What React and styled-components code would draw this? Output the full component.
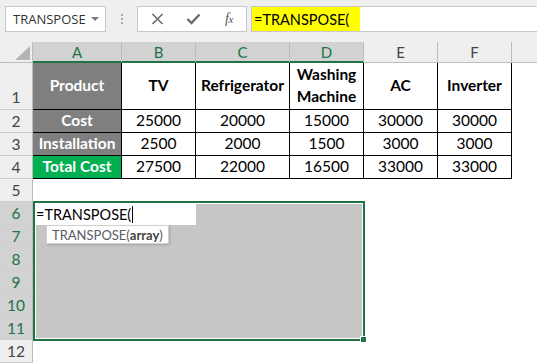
import React from 'react';
import styled, { createGlobalStyle } from 'styled-components';

const GREEN = '#217346';

const columns = ['A', 'B', 'C', 'D', 'E', 'F'];
const selectedCols = ['A', 'B', 'C', 'D'];
const selectedRows = [6, 7, 8, 9, 10, 11];

// first cell of each row is the label in column A
const tableRows = [
  { label: 'Product', labelBg: '#7f7f7f', values: ['TV', 'Refrigerator', 'Washing Machine', 'AC', 'Inverter'], bold: true },
  { label: 'Cost', labelBg: '#7f7f7f', values: ['25000', '20000', '15000', '30000', '30000'] },
  { label: 'Installation', labelBg: '#7f7f7f', values: ['2500', '2000', '1500', '3000', '3000'] },
  { label: 'Total Cost', labelBg: '#00b050', values: ['27500', '22000', '16500', '33000', '33000'] },
];

const GlobalStyle = createGlobalStyle`
  html, body {
    margin: 0;
    padding: 0;
    background: #fff;
  }
  body {
    font-family: Lato, "Open Sans", sans-serif;
  }
`;

const Window = styled.div`
  width: 537px;
  height: 363px;
  overflow: hidden;
  display: flex;
  flex-direction: column;
`;

const Toolbar = styled.div`
  height: 42px;
  flex-shrink: 0;
  box-sizing: border-box;
  background: #efefef;
  display: flex;
  align-items: flex-start;
  padding: 6px 0 0 5px;
`;

const NameBox = styled.div`
  width: 101px;
  height: 26px;
  box-sizing: border-box;
  background: #fff;
  border: 1px solid #c8c8c8;
  display: flex;
  align-items: center;
  justify-content: space-between;
  padding: 0 6px 0 7px;
  font-family: "Open Sans", sans-serif;
  font-size: 13px;
  color: #333;
`;

const DropArrow = styled.span`
  width: 0;
  height: 0;
  border-left: 4px solid transparent;
  border-right: 4px solid transparent;
  border-top: 4px solid #7a7a7a;
`;

const Grip = styled.div`
  width: 31px;
  height: 26px;
  display: flex;
  flex-direction: column;
  align-items: center;
  justify-content: center;
  gap: 2px;
  span {
    width: 2px;
    height: 2px;
    background: #a8a8a8;
  }
`;

const FxButtons = styled.div`
  width: 110px;
  height: 26px;
  box-sizing: border-box;
  background: #fff;
  border: 1px solid #c8c8c8;
  display: grid;
  grid-template-columns: repeat(3, 36px);
  align-items: center;
  justify-items: center;
  padding-left: 1px;
`;

const FxLabel = styled.span`
  font-family: "Liberation Serif", serif;
  font-style: italic;
  font-size: 14px;
  color: #555;
  letter-spacing: -0.5px;
  span {
    font-size: 11px;
  }
`;

const FormulaBar = styled.div`
  flex: 1;
  margin-left: 4px;
  height: 26px;
  box-sizing: border-box;
  background: #fff;
  border: 1px solid #c8c8c8;
  border-right: none;
  display: flex;
`;

const Highlight = styled.div`
  width: 106px;
  background: #ffff00;
  display: flex;
  align-items: center;
  padding-left: 2px;
  font-size: 14.5px;
  color: #000;
`;

const Sheet = styled.div`
  flex: 1;
  display: grid;
  grid-template-columns: 33px 89px 74px 94px 74px 74px 74px 1fr;
  grid-template-rows: 21px 47px repeat(11, 23px);
  background: #fff;
`;

const Corner = styled.div`
  grid-row: 1;
  grid-column: 1;
  box-sizing: border-box;
  background: #efefef;
  border-right: 1px solid #bdbdbd;
  border-bottom: 1px solid #bdbdbd;
  display: flex;
  justify-content: flex-end;
  align-items: flex-end;
  padding: 0 2px 2px 0;
`;

const Triangle = styled.span`
  width: 0;
  height: 0;
  border-left: 15px solid transparent;
  border-bottom: 14px solid #b4b4b4;
`;

const ColHead = styled.div`
  grid-row: 1;
  grid-column: ${p => p.$col};
  box-sizing: border-box;
  background: ${p => (p.$active ? '#d2d2d2' : '#efefef')};
  color: ${p => (p.$active ? GREEN : '#444')};
  border-right: 1px solid #bdbdbd;
  border-bottom: ${p => (p.$active ? `2px solid ${GREEN}` : '1px solid #bdbdbd')};
  display: flex;
  align-items: center;
  justify-content: center;
  font-size: 15px;
`;

const HeadFill = styled.div`
  grid-row: 1;
  grid-column: 8;
  background: #efefef;
  border-bottom: 1px solid #bdbdbd;
`;

const RowHead = styled.div`
  grid-row: ${p => p.$row};
  grid-column: 1;
  box-sizing: border-box;
  background: ${p => (p.$active ? '#d2d2d2' : '#efefef')};
  color: ${p => (p.$active ? GREEN : '#444')};
  border-right: 1px solid #bdbdbd;
  border-bottom: 1px solid #cfcfcf;
  display: flex;
  justify-content: center;
  align-items: ${p => (p.$tall ? 'flex-end' : 'center')};
  padding-bottom: ${p => (p.$tall ? '3px' : '0')};
  font-size: 15.5px;
`;

const Cell = styled.div`
  grid-row: ${p => p.$row};
  grid-column: ${p => p.$col};
  box-sizing: border-box;
  background: ${p => p.$bg || '#fff'};
  color: ${p => p.$fg || '#000'};
  font-weight: ${p => (p.$bold ? 700 : 400)};
  border-right: 1px solid #000;
  border-bottom: 1px solid #000;
  display: flex;
  align-items: center;
  justify-content: center;
  text-align: center;
  font-size: 15.5px;
  line-height: 1.4;
  white-space: pre-line;
`;

const Selection = styled.div`
  grid-row: 7 / 13;
  grid-column: 2 / 6;
  margin: -1px -1px -1px 0;
  position: relative;
  box-sizing: border-box;
  background: #c6c6c6;
  border: 2px solid ${GREEN};
  box-shadow: inset 0 0 0 1px #fff;
`;

const FillHandle = styled.span`
  position: absolute;
  right: -4px;
  bottom: -4px;
  width: 5px;
  height: 5px;
  background: ${GREEN};
  border: 1px solid #fff;
`;

const EditCell = styled.div`
  grid-row: 7;
  grid-column: 2 / 4;
  margin: 2px 0 0 2px;
  position: relative;
  background: #fff;
  display: flex;
  align-items: center;
  padding-left: 1px;
  font-size: 14.5px;
  color: #000;
`;

const Caret = styled.span`
  width: 1px;
  height: 17px;
  margin-left: 1px;
  background: #000;
`;

const Tooltip = styled.div`
  grid-row: 8;
  grid-column: 2 / 5;
  justify-self: start;
  align-self: start;
  margin-left: 13px;
  position: relative;
  height: 19px;
  box-sizing: border-box;
  padding: 0 5px;
  background: #fff;
  border: 1px solid #d0d0d0;
  box-shadow: 1px 1px 2px rgba(0, 0, 0, 0.18);
  display: flex;
  align-items: center;
  font-size: 13px;
  color: #5a5a66;
  b {
    color: #444;
  }
`;

const CloseIcon = () => (
  <svg width="13" height="12" viewBox="0 0 13 12">
    <path d="M1.5 1 L11.5 11 M11.5 1 L1.5 11" stroke="#6b6b6b" strokeWidth="1.6" fill="none" />
  </svg>
);

const CheckIcon = () => (
  <svg width="15" height="12" viewBox="0 0 15 12">
    <path d="M1.5 6 L5.5 10 L13.5 1.5" stroke="#6b6b6b" strokeWidth="2.4" fill="none" />
  </svg>
);

const App = () => {
  return (
    <>
      <GlobalStyle />
      <Window>
        <Toolbar>
          <NameBox>
            TRANSPOSE
            <DropArrow />
          </NameBox>
          <Grip>
            <span />
            <span />
            <span />
          </Grip>
          <FxButtons>
            <CloseIcon />
            <CheckIcon />
            <FxLabel>
              f<span>x</span>
            </FxLabel>
          </FxButtons>
          <FormulaBar>
            <Highlight>=TRANSPOSE(</Highlight>
          </FormulaBar>
        </Toolbar>

        <Sheet>
          <Corner>
            <Triangle />
          </Corner>
          {columns.map((c, i) => (
            <ColHead key={c} $col={i + 2} $active={selectedCols.includes(c)}>
              {c}
            </ColHead>
          ))}
          <HeadFill />

          {Array.from({ length: 12 }, (_, i) => i + 1).map(n => (
            <RowHead key={n} $row={n + 1} $tall={n === 1} $active={selectedRows.includes(n)}>
              {n}
            </RowHead>
          ))}

          {tableRows.map((row, r) => (
            <React.Fragment key={row.label}>
              <Cell $row={r + 2} $col={2} $bg={row.labelBg} $fg="#fff" $bold>
                {row.label}
              </Cell>
              {row.values.map((v, c) => (
                <Cell key={c} $row={r + 2} $col={c + 3} $bold={row.bold}>
                  {v.replace(' ', '\n')}
                </Cell>
              ))}
            </React.Fragment>
          ))}

          <Selection>
            <FillHandle />
          </Selection>
          <EditCell>
            =TRANSPOSE(
            <Caret />
          </EditCell>
          <Tooltip>
            TRANSPOSE(<b>array</b>)
          </Tooltip>
        </Sheet>
      </Window>
    </>
  );
};

export default App;
